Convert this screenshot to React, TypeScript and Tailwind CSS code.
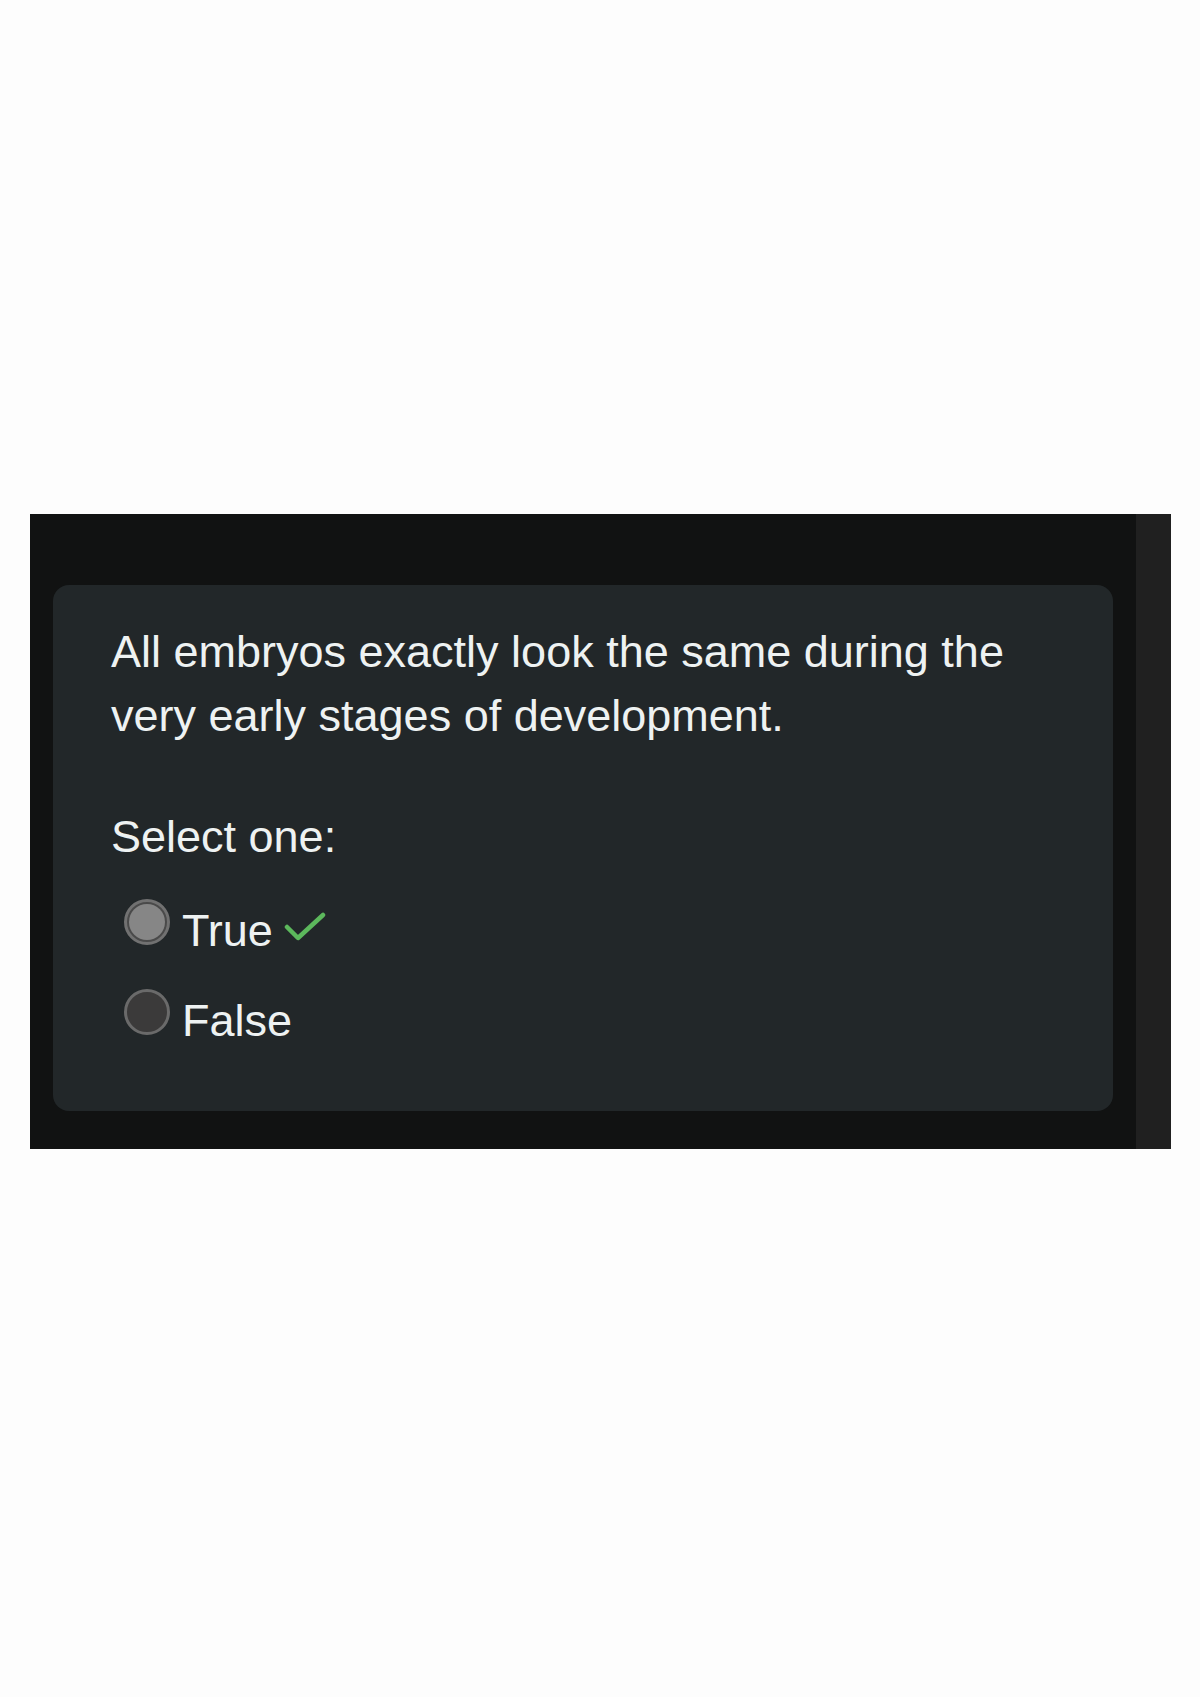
import React, { useState } from 'react';

type Choice = 'true' | 'false';

const options: { value: Choice; label: string }[] = [
  { value: 'true', label: 'True' },
  { value: 'false', label: 'False' },
];

function Radio({ checked }: { checked: boolean }) {
  if (checked) {
    return (
      <span className="flex h-[46px] w-[46px] shrink-0 rounded-full border-[3px] border-[#717171] bg-[#4a4a4a] p-[2px]">
        <span className="h-full w-full rounded-full bg-[#868686]" />
      </span>
    );
  }
  return <span className="block h-[46px] w-[46px] shrink-0 rounded-full border-[3px] border-[#6a6a6a] bg-[#3b3a3a]" />;
}

function CorrectMark() {
  return (
    <svg width="42" height="30" viewBox="0 0 42 30" className="ml-[11px] mt-[13px] shrink-0">
      <polyline points="3,15 14,26 39,3" fill="none" stroke="#5cb85c" strokeWidth="4.5" strokeLinecap="round" strokeLinejoin="round" />
    </svg>
  );
}

export default function App() {
  const [answer, setAnswer] = useState<Choice>('true');

  return (
    <div className="min-h-[1697px] bg-[#fdfdfd] pl-[30px] pt-[514px]" style={{ fontFamily: '"Liberation Sans", Arial, sans-serif' }}>
      <div className="flex w-[1141px] bg-[#111212]">
        {/* question area */}
        <div className="w-[1106px] px-[23px] pb-[38px] pt-[71px]">
          <div className="w-[1060px] rounded-[16px] bg-[#222729] pb-[58px] pl-[58px] pr-[50px] pt-[35px] text-[45px] leading-[64px] text-[#eef2f2]">
            <p>All embryos exactly look the same during the very early stages of development.</p>

            <p className="mt-[57px]">Select one:</p>

            <div className="mt-[30px] flex flex-col gap-[26px] pl-[13px]">
              {options.map((opt) => (
                <label key={opt.value} className="flex cursor-pointer items-start" onClick={() => setAnswer(opt.value)}>
                  <Radio checked={answer === opt.value} />
                  <span className="ml-[12px]">{opt.label}</span>
                  {opt.value === 'true' && <CorrectMark />}
                </label>
              ))}
            </div>
          </div>
        </div>
        {/* scrollbar track */}
        <div className="w-[35px] bg-[#202020]" />
      </div>
    </div>
  );
}
